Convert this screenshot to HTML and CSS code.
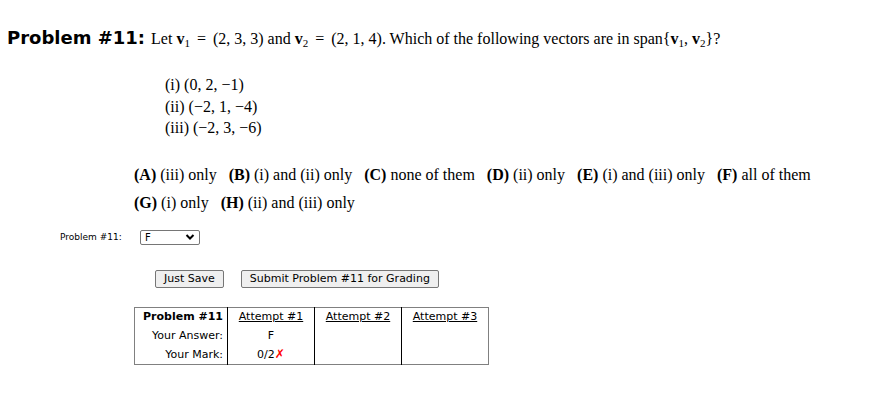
FILE: index.html
```html
<!DOCTYPE html>
<html lang="en">
<head>
  <meta charset="UTF-8">
  <title>Problem #11</title>
  <link rel="stylesheet" href="styles.css">
</head>
<body>
  <div class="problem">
    <p class="statement"><span class="prob-title">Problem #11:</span>
      Let <b>v</b><sub>1</sub><span class="eq">=</span>(2, 3, 3) and <b>v</b><sub>2</sub><span class="eq">=</span>(2, 1, 4). Which of the following vectors are in span{<b>v</b><sub>1</sub>, <b>v</b><sub>2</sub>}?</p>

    <div class="vectors">
      <div>(i) (0, 2, −1)</div>
      <div>(ii) (−2, 1, −4)</div>
      <div>(iii) (−2, 3, −6)</div>
    </div>

    <div class="choices">
      <span><b>(A)</b> (iii) only</span>
      <span><b>(B)</b> (i) and (ii) only</span>
      <span><b>(C)</b> none of them</span>
      <span><b>(D)</b> (ii) only</span>
      <span><b>(E)</b> (i) and (iii) only</span>
      <span><b>(F)</b> all of them</span><br>
      <span><b>(G)</b> (i) only</span>
      <span><b>(H)</b> (ii) and (iii) only</span>
    </div>
  </div>

  <div class="answer-row">
    <label for="ans">Problem #11:</label>
    <div class="select"><span>F</span>
      <svg width="10" height="8" viewBox="0 0 10 8"><path d="M1.5 2 L5 5.5 L8.5 2" fill="none" stroke="#000" stroke-width="2"/></svg>
    </div>
  </div>

  <div class="buttons">
    <button>Just Save</button>
    <button>Submit Problem #11 for Grading</button>
  </div>

  <table class="attempts">
    <tr>
      <th class="lbl">Problem #11</th>
      <td><u>Attempt #1</u></td>
      <td><u>Attempt #2</u></td>
      <td><u>Attempt #3</u></td>
    </tr>
    <tr>
      <td class="lbl">Your Answer:</td>
      <td>F</td>
      <td></td>
      <td></td>
    </tr>
    <tr>
      <td class="lbl">Your Mark:</td>
      <td>0/2<span class="wrong">✗</span></td>
      <td></td>
      <td></td>
    </tr>
  </table>
</body>
</html>
```

FILE: styles.css
```css
body {
  margin: 0;
  padding: 0;
  background: #fff;
  color: #000;
  font-family: "Liberation Serif", "Times New Roman", serif;
  font-size: 16px;
}

.statement {
  margin: 0;
  padding: 26px 0 0 7px;
  line-height: 24px;
}

.prob-title {
  font-family: "DejaVu Sans", Verdana, sans-serif;
  font-weight: bold;
  font-size: 18px;
  margin-right: 2px;
}

.eq {
  margin: 0 7px;
}

sub {
  font-size: 11px;
  vertical-align: -3px;
  line-height: 0;
}

.vectors {
  margin: 23px 0 0 165px;
  line-height: 21.5px;
}

.choices {
  margin: 22px 0 0 134px;
  line-height: 28px;
  white-space: nowrap;
}

.choices span {
  margin-right: 8px;
}

.answer-row {
  display: flex;
  align-items: center;
  margin: 13px 0 0 60px;
  font-family: "DejaVu Sans", Verdana, sans-serif;
  font-size: 9px;
}

.answer-row label {
  width: 80px;
}

.select {
  display: flex;
  justify-content: space-between;
  align-items: center;
  width: 50px;
  height: 13px;
  padding: 0 4px 0 4px;
  border: 1px solid #767676;
  border-radius: 2px;
  font-size: 10px;
}

.buttons {
  display: flex;
  gap: 17px;
  margin: 25px 0 0 155px;
}

.buttons button {
  font-family: "DejaVu Sans", Verdana, sans-serif;
  font-size: 11px;
  padding: 1px 8px;
  height: 18px;
  background: #efefef;
  border: 1px solid #767676;
  border-radius: 2px;
  color: #000;
}

.attempts {
  margin: 19px 0 0 134px;
  border-collapse: collapse;
  border: 1px solid #808080;
  font-family: "DejaVu Sans", Verdana, sans-serif;
  font-size: 11px;
}

.attempts td, .attempts th {
  height: 19px;
  padding: 0 4px;
  text-align: center;
  border-left: 1px solid #000;
}

.attempts .lbl {
  width: 84px;
  text-align: right;
  border-left: none;
  border-right: 1px solid #000;
}

.attempts td:nth-child(n+2) {
  width: 78px;
}

.attempts tr:first-child td, .attempts tr:first-child th {
  height: 18px;
}

.wrong {
  color: #f00;
  font-size: 12px;
}
```
